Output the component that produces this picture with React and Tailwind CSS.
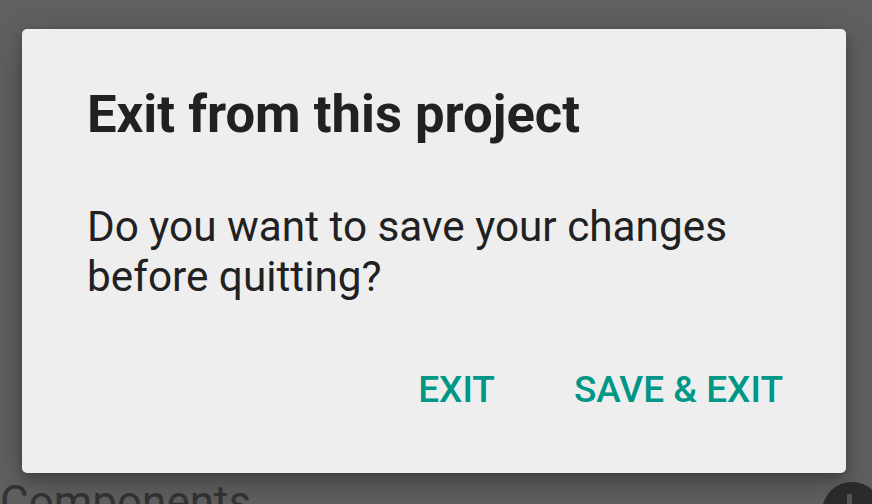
import React from 'react';

const ExitDialog = () => {
  return (
    <div className="w-[824px] rounded-[5px] bg-[#eeeeee] pt-[54px] pb-[61px] pl-[65px] pr-[63px] shadow-[0_10px_30px_rgba(0,0,0,0.28),0_4px_10px_rgba(0,0,0,0.18)]">
      <h1 className="text-[52.6px] font-bold leading-[62px] text-[#212121]">Exit from this project</h1>
      <p className="mt-[57px] text-[42.3px] leading-[50px] text-[#212121]">
        Do you want to save your changes
        <br />
        before quitting?
      </p>
      <div className="mt-[66px] flex justify-end gap-[79px]">
        <button className="text-[37px] font-medium leading-[44px] text-[#009688]">EXIT</button>
        <button className="text-[37px] font-medium leading-[44px] text-[#009688]">SAVE &amp; EXIT</button>
      </div>
    </div>
  );
};

const App = () => {
  return (
    <div className="relative h-[504px] w-[872px] overflow-hidden bg-[#606060] font-['Roboto',sans-serif]">
      {/* page underneath the scrim */}
      <div className="flex h-full flex-col justify-end">
        <div className="flex items-start justify-between">
          <span className="translate-y-[36px] text-[44px] leading-[44px] text-[#343434]">Components</span>
          <div className="relative mr-[-10px] h-[60px] w-[60px] translate-y-[38px] rounded-full bg-[#2c2c2c]">
            <span className="absolute left-[25px] top-[12px] h-[30px] w-[5px] bg-[#565656]" />
          </div>
        </div>
      </div>
      {/* dialog over the page */}
      <div className="absolute left-[22px] top-[29px]">
        <ExitDialog />
      </div>
    </div>
  );
};

export default App;
